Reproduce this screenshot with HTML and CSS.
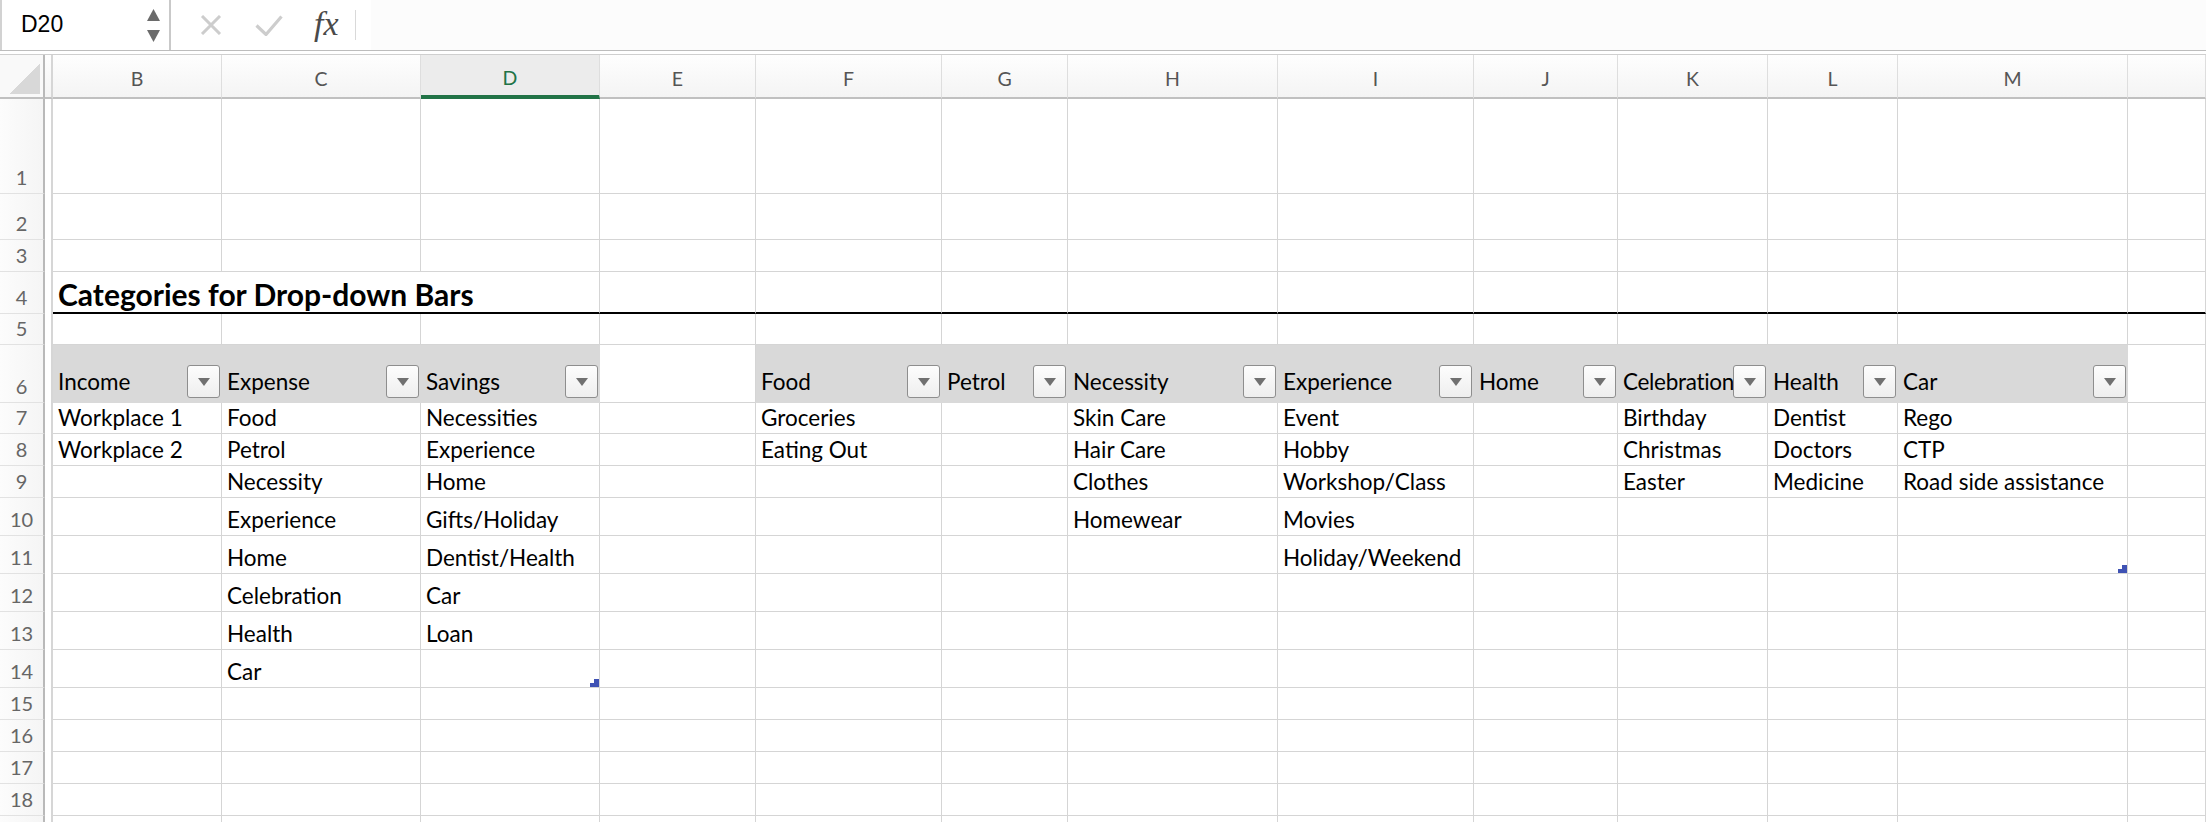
FILE: index.html
```html
<!DOCTYPE HTML>
<html>
<head>
  <meta charset="UTF-8">
  <title>Categories for Drop-down Bars</title>
  <link rel="stylesheet" href="styles.css">
</head>
<body>
  <div class="toolbar">
    <div class="namebox">
      <span class="ref">D20</span>
      <span class="spin">
        <svg width="13" height="12" viewBox="0 0 13 12"><path d="M6.5 0L13 12H0Z" fill="#6b6b6b"/></svg>
        <svg width="13" height="12" viewBox="0 0 13 12"><path d="M0 0H13L6.5 12Z" fill="#6b6b6b"/></svg>
      </span>
    </div>
    <svg class="ico-x" width="22" height="20" viewBox="0 0 22 20"><path d="M2 1L20 19M20 1L2 19" stroke="#cdcdcd" stroke-width="3"/></svg>
    <svg class="ico-ok" width="28" height="21" viewBox="0 0 28 21"><path d="M1.5 10.5L11 19.5L26.5 1.5" stroke="#cdcdcd" stroke-width="3.2" fill="none"/></svg>
    <span class="fx">fx</span>
    <span class="sep"></span>
    <div class="formula"></div>
  </div>

  <div class="sheet">
    <div class="row colhead">
      <div class="corner"><div class="tri"></div></div>
      <div class="ch ha"></div>
      <div class="ch">B</div>
      <div class="ch">C</div>
      <div class="ch sel">D</div>
      <div class="ch">E</div>
      <div class="ch">F</div>
      <div class="ch">G</div>
      <div class="ch">H</div>
      <div class="ch">I</div>
      <div class="ch">J</div>
      <div class="ch">K</div>
      <div class="ch">L</div>
      <div class="ch">M</div>
      <div class="ch"></div>
    </div>

    <div class="row h95">
      <div class="rh">1</div><div class="ha"></div>
      <div class="c"></div><div class="c"></div><div class="c"></div><div class="c"></div><div class="c"></div><div class="c"></div><div class="c"></div><div class="c"></div><div class="c"></div><div class="c"></div><div class="c"></div><div class="c"></div><div class="c"></div>
    </div>
    <div class="row h46">
      <div class="rh">2</div><div class="ha"></div>
      <div class="c"></div><div class="c"></div><div class="c"></div><div class="c"></div><div class="c"></div><div class="c"></div><div class="c"></div><div class="c"></div><div class="c"></div><div class="c"></div><div class="c"></div><div class="c"></div><div class="c"></div>
    </div>
    <div class="row h32">
      <div class="rh">3</div><div class="ha"></div>
      <div class="c"></div><div class="c"></div><div class="c"></div><div class="c"></div><div class="c"></div><div class="c"></div><div class="c"></div><div class="c"></div><div class="c"></div><div class="c"></div><div class="c"></div><div class="c"></div><div class="c"></div>
    </div>
    <div class="row h42 ruled">
      <div class="rh">4</div><div class="ha"></div>
      <div class="c title span3">Categories for Drop-down Bars</div>
      <div class="c"></div><div class="c"></div><div class="c"></div><div class="c"></div><div class="c"></div><div class="c"></div><div class="c"></div><div class="c"></div><div class="c"></div><div class="c"></div>
    </div>
    <div class="row h31">
      <div class="rh">5</div><div class="ha"></div>
      <div class="c"></div><div class="c"></div><div class="c"></div><div class="c"></div><div class="c"></div><div class="c"></div><div class="c"></div><div class="c"></div><div class="c"></div><div class="c"></div><div class="c"></div><div class="c"></div><div class="c"></div>
    </div>
    <div class="row h58">
      <div class="rh">6</div><div class="ha"></div>
      <div class="c hd"><span class="lbl">Income</span><span class="dd"></span></div>
      <div class="c hd"><span class="lbl">Expense</span><span class="dd"></span></div>
      <div class="c hd"><span class="lbl">Savings</span><span class="dd"></span></div>
      <div class="c"></div>
      <div class="c hd"><span class="lbl">Food</span><span class="dd"></span></div>
      <div class="c hd"><span class="lbl">Petrol</span><span class="dd"></span></div>
      <div class="c hd"><span class="lbl">Necessity</span><span class="dd"></span></div>
      <div class="c hd"><span class="lbl">Experience</span><span class="dd"></span></div>
      <div class="c hd"><span class="lbl">Home</span><span class="dd"></span></div>
      <div class="c hd"><span class="lbl tight">Celebration</span><span class="dd"></span></div>
      <div class="c hd"><span class="lbl">Health</span><span class="dd"></span></div>
      <div class="c hd"><span class="lbl">Car</span><span class="dd"></span></div>
      <div class="c"></div>
    </div>
    <div class="row h31">
      <div class="rh">7</div><div class="ha"></div>
      <div class="c">Workplace 1</div><div class="c">Food</div><div class="c">Necessities</div><div class="c"></div>
      <div class="c">Groceries</div><div class="c"></div><div class="c">Skin Care</div><div class="c">Event</div><div class="c"></div>
      <div class="c">Birthday</div><div class="c">Dentist</div><div class="c">Rego</div><div class="c"></div>
    </div>
    <div class="row h32">
      <div class="rh">8</div><div class="ha"></div>
      <div class="c">Workplace 2</div><div class="c">Petrol</div><div class="c">Experience</div><div class="c"></div>
      <div class="c">Eating Out</div><div class="c"></div><div class="c">Hair Care</div><div class="c">Hobby</div><div class="c"></div>
      <div class="c">Christmas</div><div class="c">Doctors</div><div class="c">CTP</div><div class="c"></div>
    </div>
    <div class="row h32">
      <div class="rh">9</div><div class="ha"></div>
      <div class="c"></div><div class="c">Necessity</div><div class="c">Home</div><div class="c"></div>
      <div class="c"></div><div class="c"></div><div class="c">Clothes</div><div class="c">Workshop/Class</div><div class="c"></div>
      <div class="c">Easter</div><div class="c">Medicine</div><div class="c">Road side assistance</div><div class="c"></div>
    </div>
    <div class="row h38">
      <div class="rh">10</div><div class="ha"></div>
      <div class="c"></div><div class="c">Experience</div><div class="c">Gifts/Holiday</div><div class="c"></div>
      <div class="c"></div><div class="c"></div><div class="c">Homewear</div><div class="c">Movies</div><div class="c"></div>
      <div class="c"></div><div class="c"></div><div class="c"></div><div class="c"></div>
    </div>
    <div class="row h38">
      <div class="rh">11</div><div class="ha"></div>
      <div class="c"></div><div class="c">Home</div><div class="c">Dentist/Health</div><div class="c"></div>
      <div class="c"></div><div class="c"></div><div class="c"></div><div class="c">Holiday/Weekend</div><div class="c"></div>
      <div class="c"></div><div class="c"></div>
      <div class="c"><svg class="handle" width="9" height="8" viewBox="0 0 9 8"><path d="M4 0H9V8H0V4H4Z" fill="#3f52b4"/></svg></div>
      <div class="c"></div>
    </div>
    <div class="row h38">
      <div class="rh">12</div><div class="ha"></div>
      <div class="c"></div><div class="c">Celebration</div><div class="c">Car</div><div class="c"></div>
      <div class="c"></div><div class="c"></div><div class="c"></div><div class="c"></div><div class="c"></div>
      <div class="c"></div><div class="c"></div><div class="c"></div><div class="c"></div>
    </div>
    <div class="row h38">
      <div class="rh">13</div><div class="ha"></div>
      <div class="c"></div><div class="c">Health</div><div class="c">Loan</div><div class="c"></div>
      <div class="c"></div><div class="c"></div><div class="c"></div><div class="c"></div><div class="c"></div>
      <div class="c"></div><div class="c"></div><div class="c"></div><div class="c"></div>
    </div>
    <div class="row h38">
      <div class="rh">14</div><div class="ha"></div>
      <div class="c"></div><div class="c">Car</div>
      <div class="c"><svg class="handle" width="9" height="8" viewBox="0 0 9 8"><path d="M4 0H9V8H0V4H4Z" fill="#3f52b4"/></svg></div>
      <div class="c"></div>
      <div class="c"></div><div class="c"></div><div class="c"></div><div class="c"></div><div class="c"></div>
      <div class="c"></div><div class="c"></div><div class="c"></div><div class="c"></div>
    </div>
    <div class="row h32">
      <div class="rh">15</div><div class="ha"></div>
      <div class="c"></div><div class="c"></div><div class="c"></div><div class="c"></div><div class="c"></div><div class="c"></div><div class="c"></div><div class="c"></div><div class="c"></div><div class="c"></div><div class="c"></div><div class="c"></div><div class="c"></div>
    </div>
    <div class="row h32">
      <div class="rh">16</div><div class="ha"></div>
      <div class="c"></div><div class="c"></div><div class="c"></div><div class="c"></div><div class="c"></div><div class="c"></div><div class="c"></div><div class="c"></div><div class="c"></div><div class="c"></div><div class="c"></div><div class="c"></div><div class="c"></div>
    </div>
    <div class="row h32">
      <div class="rh">17</div><div class="ha"></div>
      <div class="c"></div><div class="c"></div><div class="c"></div><div class="c"></div><div class="c"></div><div class="c"></div><div class="c"></div><div class="c"></div><div class="c"></div><div class="c"></div><div class="c"></div><div class="c"></div><div class="c"></div>
    </div>
    <div class="row h32">
      <div class="rh">18</div><div class="ha"></div>
      <div class="c"></div><div class="c"></div><div class="c"></div><div class="c"></div><div class="c"></div><div class="c"></div><div class="c"></div><div class="c"></div><div class="c"></div><div class="c"></div><div class="c"></div><div class="c"></div><div class="c"></div>
    </div>
    <div class="row h32">
      <div class="rh"></div><div class="ha"></div>
      <div class="c"></div><div class="c"></div><div class="c"></div><div class="c"></div><div class="c"></div><div class="c"></div><div class="c"></div><div class="c"></div><div class="c"></div><div class="c"></div><div class="c"></div><div class="c"></div><div class="c"></div>
    </div>
  </div>
</body>
</html>
```

FILE: styles.css
```css
body { margin: 0; background: #fff; overflow: hidden; font-family: "Lato", "Liberation Sans", sans-serif; color: #000; }

/* formula bar */
.toolbar { display: flex; align-items: center; height: 50px; border-bottom: 1px solid #bdbdbd; }
.namebox { display: flex; align-items: center; box-sizing: border-box; width: 171px; height: 100%; border-left: 2px solid #d2d2d2; border-right: 2px solid #c9c9c9; padding-left: 19px; }
.ref { font-family: "Liberation Sans", Arial, sans-serif; font-size: 23px; padding-bottom: 2px; }
.spin { display: flex; flex-direction: column; gap: 9px; margin-left: auto; margin-right: 9px; }
.spin svg { display: block; }
.ico-x { margin-left: 29px; }
.ico-ok { margin-left: 33px; }
.fx { margin-left: 31px; font-family: "Liberation Serif", "DejaVu Serif", serif; font-style: italic; font-size: 34px; line-height: 34px; color: #4a4a4a; padding-bottom: 3px; }
.sep { width: 1px; height: 30px; background: #d9d9d9; margin-left: 16px; }
.formula { flex: 1; height: 100%; margin-left: 15px; background: #fcfcfc; }

/* grid */
.sheet { margin-top: 3px; border-top: 1px solid #cfcfcf;
  --cols: 45px 8px 169px 199px 179px 156px 186px 126px 210px 196px 144px 150px 130px 230px 1fr; }
.row { display: grid; grid-template-columns: var(--cols); }
.h31 { height: 31px; }
.h32 { height: 32px; }
.h38 { height: 38px; }
.h42 { height: 42px; }
.h46 { height: 46px; }
.h58 { height: 58px; }
.h95 { height: 95px; }

.colhead { height: 44px; }
.corner { display: flex; box-sizing: border-box; background: #f9f9f9; border-right: 2px solid #b9b9b9; border-bottom: 2px solid #c0c0c0; }
.tri { width: 30px; height: 30px; margin: auto 3px 3px auto; background: linear-gradient(to top left, #d8d8d8 50%, transparent 50%); }
.ch { display: flex; align-items: center; justify-content: center; box-sizing: border-box; padding-top: 5px;
  background: linear-gradient(#fefefe, #f4f4f4); border-right: 1px solid #dedede; border-bottom: 2px solid #c0c0c0;
  font-size: 19.5px; color: #555; }
.ch.sel { background: #ececec; color: #217346; border-bottom: 4px solid #217346; }
.ch.ha { border-right: 2px solid #d6d6d6; }

.rh { display: flex; align-items: flex-end; justify-content: center; box-sizing: border-box; padding-bottom: 5px;
  background: linear-gradient(to right, #fcfcfc, #f5f5f5); border-right: 2px solid #b9b9b9; border-bottom: 1px solid #e2e2e2;
  font-size: 20px; line-height: 22px; color: #666; }
.ha { border-right: 2px solid #d6d6d6; }

.c { position: relative; display: flex; align-items: flex-end; box-sizing: border-box; min-width: 0; padding: 0 5px 2px;
  border-right: 1px solid #d5d5d5; border-bottom: 1px solid #d5d5d5;
  font-size: 22.5px; line-height: 26px; white-space: nowrap; overflow: hidden; }

.ruled .c { border-bottom: 2px solid #000; }
.title { grid-column: span 3; font-weight: bold; font-size: 30px; line-height: 34px; padding-bottom: 1px; }

/* filter header row */
.hd { justify-content: space-between; padding: 0 1px 4px 5px; background: #d9d9d9; border-color: #d9d9d9; }
.lbl { min-width: 0; margin-bottom: 3px; }
.lbl.tight { letter-spacing: -0.3px; }
.dd { flex: none; display: flex; align-items: center; justify-content: center; box-sizing: border-box; width: 33px; height: 33px;
  border: 1px solid #8e8e8e; border-radius: 3px; background: linear-gradient(#fdfdfd, #eeeeee); }
.dd::after { content: ""; border-left: 6px solid transparent; border-right: 6px solid transparent; border-top: 8px solid #707070; margin-top: 1px; }

.handle { position: absolute; right: 0; bottom: 0; }
```
